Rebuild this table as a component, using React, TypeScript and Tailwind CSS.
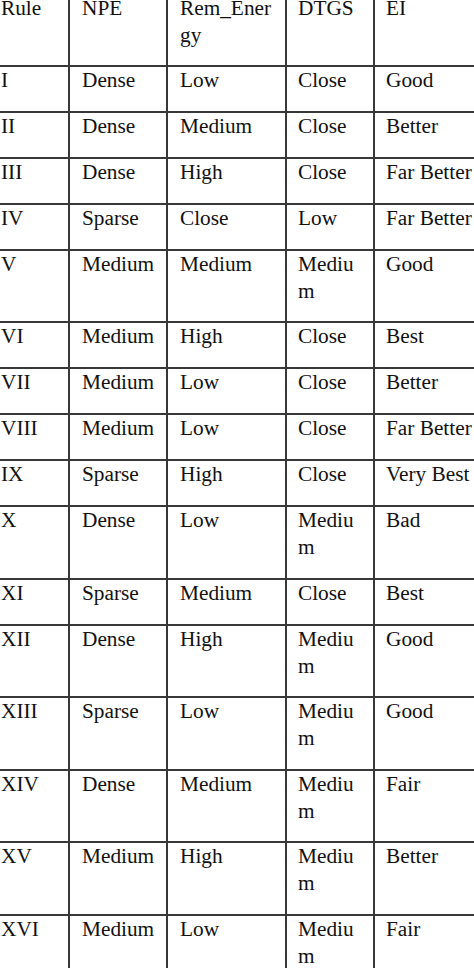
type TRow = {
  rule: string;
  npe: string;
  energy: string;
  dtgs: string;
  ei: string;
  h: string;
};

const rows: TRow[] = [
  { rule: "I", npe: "Dense", energy: "Low", dtgs: "Close", ei: "Good", h: "h-[46px]" },
  { rule: "II", npe: "Dense", energy: "Medium", dtgs: "Close", ei: "Better", h: "h-[46px]" },
  { rule: "III", npe: "Dense", energy: "High", dtgs: "Close", ei: "Far Better", h: "h-[46px]" },
  { rule: "IV", npe: "Sparse", energy: "Close", dtgs: "Low", ei: "Far Better", h: "h-[46px]" },
  { rule: "V", npe: "Medium", energy: "Medium", dtgs: "Medium", ei: "Good", h: "h-[72px]" },
  { rule: "VI", npe: "Medium", energy: "High", dtgs: "Close", ei: "Best", h: "h-[46px]" },
  { rule: "VII", npe: "Medium", energy: "Low", dtgs: "Close", ei: "Better", h: "h-[46px]" },
  { rule: "VIII", npe: "Medium", energy: "Low", dtgs: "Close", ei: "Far Better", h: "h-[46px]" },
  { rule: "IX", npe: "Sparse", energy: "High", dtgs: "Close", ei: "Very Best", h: "h-[46px]" },
  { rule: "X", npe: "Dense", energy: "Low", dtgs: "Medium", ei: "Bad", h: "h-[73px]" },
  { rule: "XI", npe: "Sparse", energy: "Medium", dtgs: "Close", ei: "Best", h: "h-[46px]" },
  { rule: "XII", npe: "Dense", energy: "High", dtgs: "Medium", ei: "Good", h: "h-[72px]" },
  { rule: "XIII", npe: "Sparse", energy: "Low", dtgs: "Medium", ei: "Good", h: "h-[73px]" },
  { rule: "XIV", npe: "Dense", energy: "Medium", dtgs: "Medium", ei: "Fair", h: "h-[72px]" },
  { rule: "XV", npe: "Medium", energy: "High", dtgs: "Medium", ei: "Better", h: "h-[73px]" },
  { rule: "XVI", npe: "Medium", energy: "Low", dtgs: "Medium", ei: "Fair", h: "h-[73px]" },
];

const c1 = "w-[70px] shrink-0 border-r-2 border-[#383838] pl-[1px] pr-2";
const c2 = "w-[98px] shrink-0 border-r-2 border-[#383838] pl-3 pr-1";
const c3 = "w-[119px] shrink-0 border-r-2 border-[#383838] pl-3 pr-2";
const c4 = "w-[88px] shrink-0 border-r-2 border-[#383838] pl-[11px] pr-3";
const c5 = "flex-1 pl-[11px] whitespace-nowrap";

export default function App() {
  return (
    <div className="h-screen w-full overflow-hidden bg-white">
      <div
        className="text-[21.3px] leading-[27px] text-[#111] [word-break:break-all]"
        style={{ fontFamily: '"Liberation Serif", "Times New Roman", serif' }}
      >
        <div className="flex h-[67px] border-b-2 border-[#383838]">
          <div className={c1}>
            <div className="-mt-[5px]">Rule</div>
          </div>
          <div className={c2}>
            <div className="-mt-[5px]">NPE</div>
          </div>
          <div className={c3}>
            <div className="-mt-[5px]">Rem_Energy</div>
          </div>
          <div className={c4}>
            <div className="-mt-[5px]">DTGS</div>
          </div>
          <div className={c5}>
            <div className="-mt-[5px]">EI</div>
          </div>
        </div>
        {rows.map((r) => (
          <div key={r.rule} className={`flex border-b-2 border-[#383838] ${r.h}`}>
            <div className={c1}>{r.rule}</div>
            <div className={c2}>{r.npe}</div>
            <div className={c3}>{r.energy}</div>
            <div className={c4}>{r.dtgs}</div>
            <div className={c5}>{r.ei}</div>
          </div>
        ))}
      </div>
    </div>
  );
}
